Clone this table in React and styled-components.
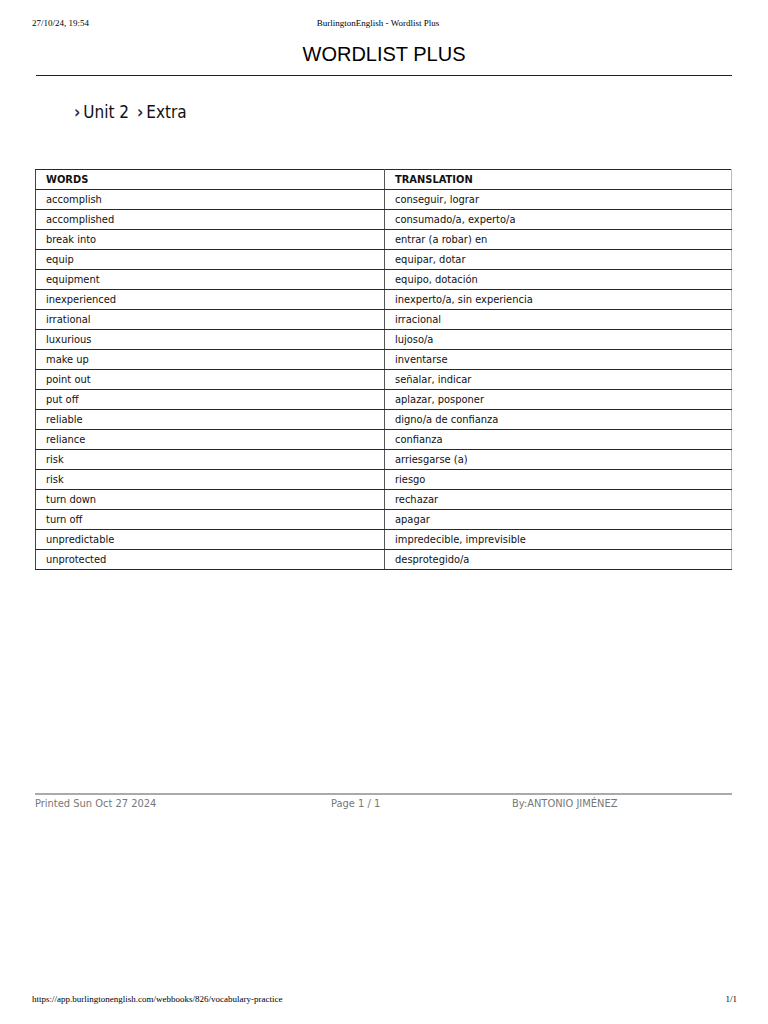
import styled, { createGlobalStyle } from 'styled-components';

const GlobalStyle = createGlobalStyle`
  html, body {
    margin: 0;
    padding: 0;
    background: #ffffff;
  }
`;

const Page = styled.div`
  width: 768px;
  height: 1024px;
  display: flex;
  flex-direction: column;
  background: #ffffff;
`;

const PrintBar = styled.div`
  display: flex;
  justify-content: space-between;
  align-items: center;
  padding: 0 31px 0 32px;
  height: 14px;
  margin-top: ${(p) => p.$top || 0}px;
  margin-bottom: ${(p) => p.$bottom || 0}px;
  font-family: "Liberation Serif", serif;
  font-size: 9px;
  color: #000;

  span:nth-child(2) {
    flex: 1;
    text-align: center;
  }
`;

const Content = styled.div`
  flex: 1;
  padding: 0 36px 0 35px;
  display: flex;
  flex-direction: column;
`;

const Title = styled.h1`
  margin: 12px 0 0 1px;
  font-family: "Liberation Sans", Arial, sans-serif;
  font-weight: 400;
  font-size: 20px;
  line-height: 24px;
  text-align: center;
  color: #000;
  padding-bottom: 9px;
  border-bottom: 1px solid #222;
`;

const Crumbs = styled.div`
  display: flex;
  align-items: center;
  gap: 8px;
  margin: 26px 0 0 39px;
  font-family: "DejaVu Sans Condensed", "DejaVu Sans", sans-serif;
  font-size: 17px;
  color: #111;
`;

const Crumb = styled.span`
  display: flex;
  align-items: center;
  gap: 3px;
`;

const Chevron = styled.span`
  color: #221f4f;
  font-weight: 700;
  font-size: 17px;
  line-height: 1;
`;

const Table = styled.table`
  margin-top: 47px;
  width: 697px;
  border-collapse: collapse;
  font-family: "DejaVu Sans Condensed", "DejaVu Sans", sans-serif;
  font-size: 11px;
  color: #111;
`;

const Cell = styled.td`
  height: 19px;
  padding: 0 10px;
  border-top: 1px solid #2a2a2a;
  border-bottom: 1px solid #2a2a2a;
  border-left: 1px solid ${(p) => (p.$first ? '#444' : '#555')};
  border-right: 1px solid ${(p) => (p.$first ? '#555' : '#bbb')};
  width: ${(p) => (p.$first ? '328px' : 'auto')};
  font-weight: ${(p) => (p.$head ? 700 : 400)};
  text-align: left;
  vertical-align: middle;
`;

const Footer = styled.div`
  margin-top: 223px;
  border-top: 2px solid #aaa;
  display: flex;
  padding-top: 2px;
  font-family: "DejaVu Sans Condensed", "DejaVu Sans", sans-serif;
  font-size: 11px;
  color: #777;
`;

const FooterCell = styled.span`
  width: ${(p) => p.$w}px;
`;

const words = [
  ['accomplish', 'conseguir, lograr'],
  ['accomplished', 'consumado/a, experto/a'],
  ['break into', 'entrar (a robar) en'],
  ['equip', 'equipar, dotar'],
  ['equipment', 'equipo, dotación'],
  ['inexperienced', 'inexperto/a, sin experiencia'],
  ['irrational', 'irracional'],
  ['luxurious', 'lujoso/a'],
  ['make up', 'inventarse'],
  ['point out', 'señalar, indicar'],
  ['put off', 'aplazar, posponer'],
  ['reliable', 'digno/a de confianza'],
  ['reliance', 'confianza'],
  ['risk', 'arriesgarse (a)'],
  ['risk', 'riesgo'],
  ['turn down', 'rechazar'],
  ['turn off', 'apagar'],
  ['unpredictable', 'impredecible, imprevisible'],
  ['unprotected', 'desprotegido/a'],
];

export default function App() {
  return (
    <Page>
      <GlobalStyle />
      <PrintBar $top={16}>
        <span>27/10/24, 19:54</span>
        <span>BurlingtonEnglish - Wordlist Plus</span>
        <span style={{ width: 70 }} />
      </PrintBar>
      <Content>
        <Title>WORDLIST PLUS</Title>
        <Crumbs>
          <Crumb>
            <Chevron>›</Chevron>
            Unit 2
          </Crumb>
          <Crumb>
            <Chevron>›</Chevron>
            Extra
          </Crumb>
        </Crumbs>
        <Table>
          <thead>
            <tr>
              <Cell as="th" $first $head>WORDS</Cell>
              <Cell as="th" $head>TRANSLATION</Cell>
            </tr>
          </thead>
          <tbody>
            {words.map(([w, t], i) => (
              <tr key={i}>
                <Cell $first>{w}</Cell>
                <Cell>{t}</Cell>
              </tr>
            ))}
          </tbody>
        </Table>
        <Footer>
          <FooterCell $w={296}>Printed Sun Oct 27 2024</FooterCell>
          <FooterCell $w={181}>Page 1 / 1</FooterCell>
          <FooterCell $w={200}>By:ANTONIO JIMÉNEZ</FooterCell>
        </Footer>
      </Content>
      <PrintBar $bottom={18}>
        <span>https://app.burlingtonenglish.com/webbooks/826/vocabulary-practice</span>
        <span />
        <span>1/1</span>
      </PrintBar>
    </Page>
  );
}
